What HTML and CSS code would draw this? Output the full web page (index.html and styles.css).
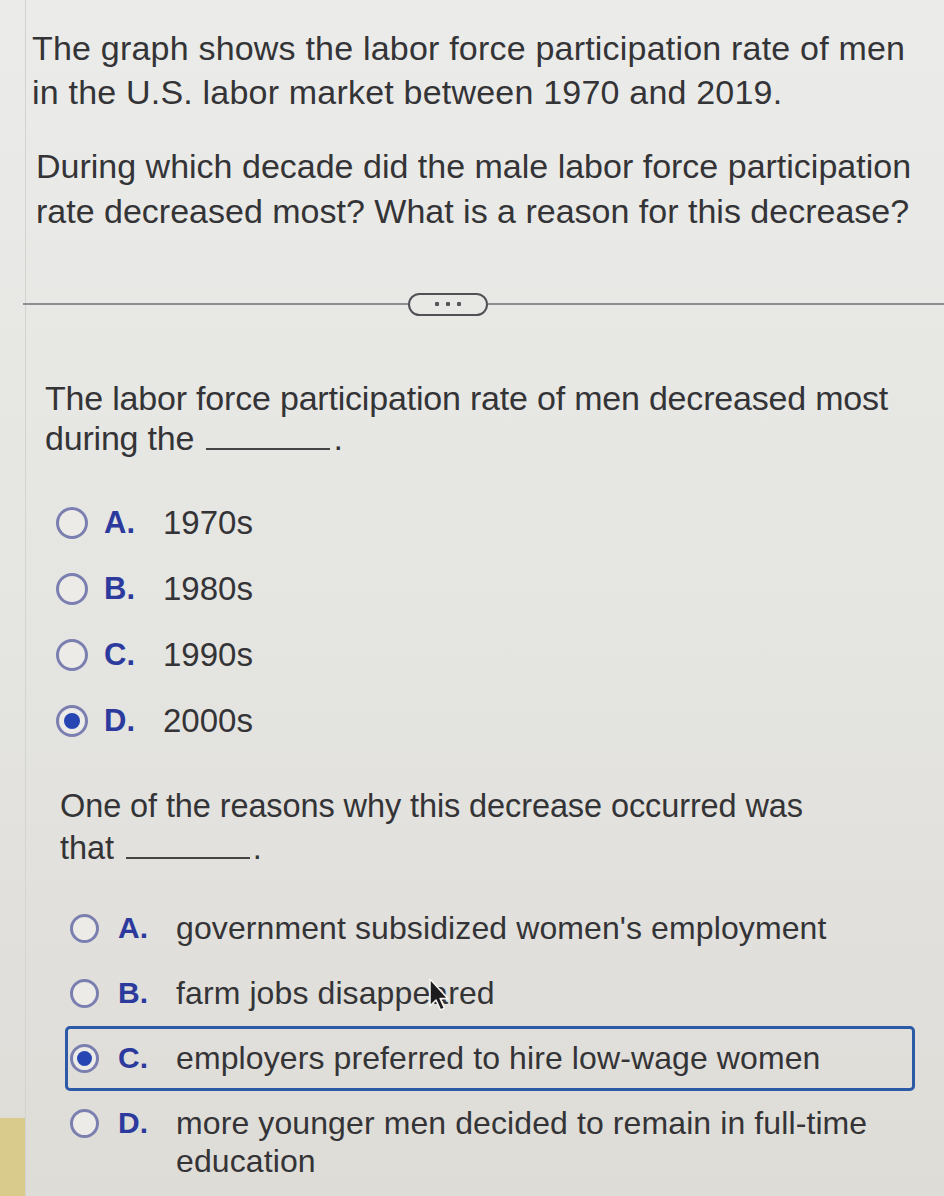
FILE: index.html
```html
<!DOCTYPE html>
<html>
<head>
<meta charset="utf-8">
<link rel="stylesheet" href="styles.css">
</head>
<body>
<div class="page">
  <div class="side"><div class="side-yellow"></div></div>
  <div class="content">
    <div class="question">
      <p class="p1">The graph shows the labor force participation rate of men in the U.S. labor market between 1970 and 2019.</p>
      <p class="p2">During which decade did the male labor force participation rate decreased most? What is a reason for this decrease?</p>
    </div>
    <div class="divider">
      <div class="line short"></div>
      <div class="pill"><span></span><span></span><span></span></div>
      <div class="line"></div>
    </div>
    <div class="part part1">
      <p class="prompt">The labor force participation rate of men decreased most during the <span class="blank"></span>.</p>
      <ul class="options opts1">
        <li><span class="radio"></span><span class="letter">A.</span><span class="text">1970s</span></li>
        <li><span class="radio"></span><span class="letter">B.</span><span class="text">1980s</span></li>
        <li><span class="radio"></span><span class="letter">C.</span><span class="text">1990s</span></li>
        <li><span class="radio checked"></span><span class="letter">D.</span><span class="text">2000s</span></li>
      </ul>
    </div>
    <div class="part part2">
      <p class="prompt">One of the reasons why this decrease occurred was that <span class="blank"></span>.</p>
    </div>
    <ul class="options opts2">
      <li><span class="radio"></span><span class="letter">A.</span><span class="text">government subsidized women's employment</span></li>
      <li class="has-cursor"><span class="radio"></span><span class="letter">B.</span><span class="text">farm jobs disappeared</span>
        <svg class="cursor" width="22" height="36" viewBox="0 0 22 36"><path d="M2 1 L2 28 L8 22 L12.5 32 L16.5 30.2 L12.2 20.6 L20 20.6 Z" fill="#1c1c1e" stroke="#f4f4f2" stroke-width="1.6" stroke-linejoin="round"/></svg>
      </li>
      <li class="selected"><span class="radio checked"></span><span class="letter">C.</span><span class="text">employers preferred to hire low-wage women</span></li>
      <li><span class="radio"></span><span class="letter">D.</span><span class="text">more younger men decided to remain in full-time education</span></li>
    </ul>
  </div>
</div>
</body>
</html>
```

FILE: styles.css
```css
* { box-sizing: border-box; }
html, body { margin: 0; padding: 0; }
body {
  background: linear-gradient(180deg, #ebebe9 0%, #e5e5e2 50%, #dedcd7 100%);
  font-family: "Liberation Sans", Arial, sans-serif;
  color: #343437;
  width: 944px;
  height: 1196px;
  overflow: hidden;
}
.page {
  display: flex;
  height: 1196px;
}
.side {
  width: 26px;
  flex: none;
  display: flex;
  flex-direction: column;
  justify-content: flex-end;
  border-right: 1px solid #d3d3cf;
}
.side-yellow {
  height: 78px;
  background: #d8cb8c;
}
.content {
  flex: 1;
  padding-top: 26px;
  padding-right: 14px;
}
p { margin: 0; }
.p1, .p2 {
  font-size: 34px;
  line-height: 44px;
}
.p1 { padding-left: 6px; letter-spacing: 0.2px; }
.p2 { margin-top: 30px; padding-left: 10px; line-height: 45px; letter-spacing: 0; }
.divider {
  display: flex;
  align-items: center;
  margin-top: 58px;
  height: 24px;
  margin-right: -14px;
  margin-left: -3px;
}
.line { flex: 1; height: 2px; background: #8d8e91; }
.line.short { flex: none; width: 385px; }
.pill {
  width: 80px;
  height: 23px;
  border: 2px solid #4f5155;
  border-radius: 12px;
  display: flex;
  align-items: center;
  justify-content: center;
  gap: 7px;
}
.pill span { width: 4px; height: 4px; background: #555659; border-radius: 1px; }
.prompt {
  font-size: 34px;
  line-height: 40px;
  letter-spacing: -0.2px;
}
.part1 { margin-top: 62px; padding-left: 19px; }
.blank {
  display: inline-block;
  width: 124px;
  border-bottom: 2px solid #444;
  margin-left: 3px;
  margin-right: 3px;
}
.options { list-style: none; margin: 0; padding: 0; }
.options li { display: flex; align-items: center; }
.radio {
  flex: none;
  width: 32px;
  height: 32px;
  border: 3px solid #7b7fb0;
  border-radius: 50%;
  position: relative;
  background: #ecebe8;
}
.radio.checked::after {
  content: "";
  position: absolute;
  left: 5px; top: 5px;
  width: 16px; height: 16px;
  border-radius: 50%;
  background: #2746b4;
}
.letter {
  font-weight: bold;
  color: #2c3a9e;
  flex: none;
}
.opts1 {
  margin-top: 47px;
  padding-left: 11px;
  display: flex;
  flex-direction: column;
  gap: 30px;
}
.opts1 li { height: 36px; font-size: 33px; }
.opts1 .letter { margin-left: 16px; width: 59px; font-size: 31px; }
.part2 { margin-top: 46px; padding-left: 34px; }
.part2 .prompt { font-size: 32.5px; line-height: 42px; max-width: 800px; letter-spacing: -0.1px; }
.opts2 {
  margin-top: 27px;
  margin-left: 39px;
  width: 850px;
}
.opts2 li {
  border: 3px solid transparent;
  border-radius: 5px;
  padding: 10px 0 11px 2px;
  line-height: 38px;
  font-size: 32px;
  align-items: flex-start;
}
.opts2 .radio { width: 29px; height: 29px; margin-top: 5px; }
.opts2 .radio.checked::after { left: 4px; top: 4px; width: 15px; height: 15px; }
.opts2 .letter { margin-left: 19px; width: 58px; font-size: 30px; }
.opts2 .text { letter-spacing: 0.1px; }
.opts2 li.selected { border-color: #2d5aa6; }
.has-cursor { position: relative; }
.cursor {
  position: absolute;
  left: 360px;
  top: 14px;
}
```
